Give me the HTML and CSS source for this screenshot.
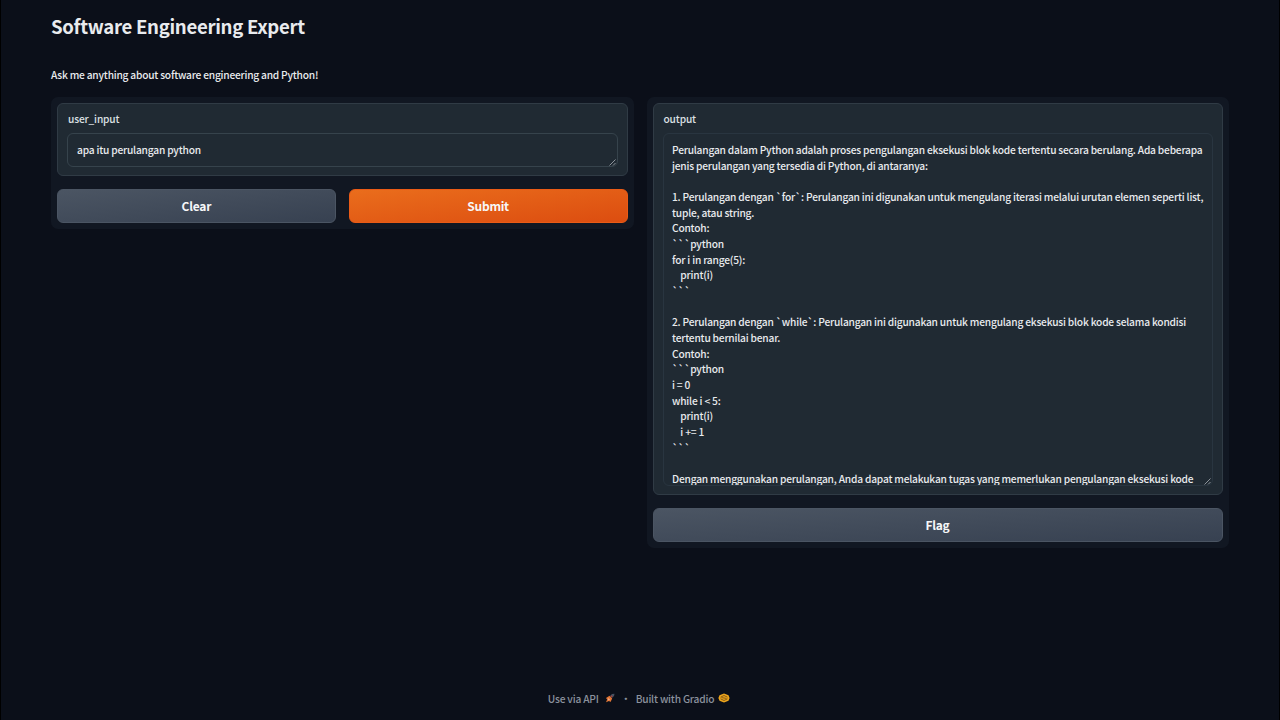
FILE: index.html
```html
<!DOCTYPE html>
<html lang="en">
<head>
  <meta charset="UTF-8">
  <meta name="viewport" content="width=device-width, initial-scale=1.0">
  <title>Software Engineering Expert</title>
  <link rel="stylesheet" href="styles.css">
</head>
<body>
  <main class="container">
    <h1>Software Engineering Expert</h1>
    <p class="description">Ask me anything about software engineering and Python!</p>

    <div class="columns">
      <section class="panel">
        <div class="block">
          <div class="label">user_input</div>
          <div class="textbox">apa itu perulangan python<svg class="grip" viewBox="0 0 7 7"><path d="M0.5 6.5L6.5 0.5M4 6.5L6.5 4"/></svg></div>
        </div>
        <div class="buttons">
          <button class="btn" type="button">Clear</button>
          <button class="btn primary" type="button">Submit</button>
        </div>
      </section>

      <section class="panel">
        <div class="block">
          <div class="label">output</div>
          <div class="textbox output">Perulangan dalam Python adalah proses pengulangan eksekusi blok kode tertentu secara berulang. Ada beberapa
jenis perulangan yang tersedia di Python, di antaranya:

1. Perulangan dengan `for`: Perulangan ini digunakan untuk mengulang iterasi melalui urutan elemen seperti list,
tuple, atau string.
Contoh:
&#96;&#96;&#96;python
for i in range(5):
    print(i)
&#96;&#96;&#96;

2. Perulangan dengan `while`: Perulangan ini digunakan untuk mengulang eksekusi blok kode selama kondisi
tertentu bernilai benar.
Contoh:
&#96;&#96;&#96;python
i = 0
while i &lt; 5:
    print(i)
    i += 1
&#96;&#96;&#96;

Dengan menggunakan perulangan, Anda dapat melakukan tugas yang memerlukan pengulangan eksekusi kode<svg class="grip" viewBox="0 0 7 7"><path d="M0.5 6.5L6.5 0.5M4 6.5L6.5 4"/></svg></div>
        </div>
        <div class="buttons">
          <button class="btn" type="button">Flag</button>
        </div>
      </section>
    </div>
  </main>

  <footer>
    <span>Use via API</span>
    <svg class="rocket" viewBox="0 0 10 10">
      <path d="M5 3L7 1L9.5 0.8L9 3L7 5Z" fill="#465161"/>
      <path d="M1 5L4.5 2.8L7.2 5.5L5.5 9L4 8L1 9.2L2.2 6.5Z" fill="#e27635"/>
      <path d="M3.2 5L5 6.8L3.2 7.4Z" fill="#f3b59a"/>
      <circle cx="6.6" cy="3.3" r="0.9" fill="#a93f38"/>
    </svg>
    <span class="dot">·</span>
    <span>Built with Gradio</span>
    <svg class="logo" viewBox="0 0 12 10">
      <path d="M6 0.5L10.5 2.2L11.6 5L10.5 7.8L6 9.5L1.5 7.8L0.4 5L1.5 2.2Z" fill="#eda51c"/>
      <path d="M2.5 4.2L6 2.5L9.5 4.2M2.5 5.8L6 7.5L9.5 5.8" fill="none" stroke="#704a13" stroke-width="0.8"/>
      <path d="M3.5 4.6L8.5 5.4" fill="none" stroke="#704a13" stroke-width="0.8"/>
    </svg>
  </footer>
</body>
</html>
```
FILE: styles.css
```css
* {
  box-sizing: border-box;
}
body {
  margin: 0;
  height: 720px;
  overflow: hidden;
  display: flex;
  flex-direction: column;
  justify-content: space-between;
  background: #0b0f19;
  border-left: 1px solid #000;
  border-right: 1px solid #000;
  color: #e9ebee;
  font-family: "Noto Sans CJK SC", "Noto Sans", sans-serif;
  font-size: 10.2px;
  font-weight: 500;
  letter-spacing: -0.2px;
}
.container {
  padding: 12px 51px 0 50px;
}
h1 {
  margin: 0;
  font-size: 18.6px;
  font-weight: 700;
  line-height: 28px;
  letter-spacing: -0.3px;
}
.description {
  margin: 27px 0 14px;
  line-height: 16px;
  letter-spacing: -0.22px;
}
.columns {
  display: grid;
  grid-template-columns: 582.5px 582px;
  gap: 13px;
  align-items: start;
}
.panel {
  padding: 6px;
  background: #111722;
  border-radius: 7px;
}
.block {
  padding: 7px 9px 8px;
  background: #202a33;
  border: 1px solid #303b45;
  border-radius: 6px;
}
.label {
  height: 22px;
  padding-left: 1px;
  line-height: 16px;
  letter-spacing: -0.15px;
  color: #dce0e4;
}
.textbox {
  position: relative;
  height: 34px;
  padding: 8px 9px;
  border: 1px solid #36434c;
  border-radius: 6px;
  line-height: 15.67px;
  white-space: pre;
}
.output {
  height: 353px;
  padding-left: 8.5px;
  border-color: #293540;
  overflow: hidden;
}
.grip {
  position: absolute;
  right: 1px;
  bottom: 0;
  width: 7px;
  height: 7px;
  fill: none;
  stroke: #a8afb5;
  stroke-width: 0.8;
}
.buttons {
  display: flex;
  gap: 13px;
  margin-top: 13px;
}
.btn {
  flex: 1;
  height: 34px;
  padding: 0 0 2px;
  border: 1px solid #4b5563;
  border-radius: 6px;
  background: linear-gradient(to bottom right, #4b5563, #374151);
  color: #f6f7f8;
  font-family: inherit;
  font-size: 12px;
  font-weight: 700;
  letter-spacing: -0.25px;
}
.primary {
  border-color: #ea5b16;
  background: linear-gradient(to bottom right, #ea6d1c, #dc4d10);
}
footer {
  display: flex;
  align-items: center;
  justify-content: center;
  height: 16px;
  margin: 0 2px 14px 0;
  color: #8b929d;
}
.rocket {
  width: 10px;
  height: 10px;
  margin-left: 6px;
}
.dot {
  margin: 0 5px 0 6px;
}
.logo {
  width: 12px;
  height: 10px;
  margin-left: 4px;
}
```
